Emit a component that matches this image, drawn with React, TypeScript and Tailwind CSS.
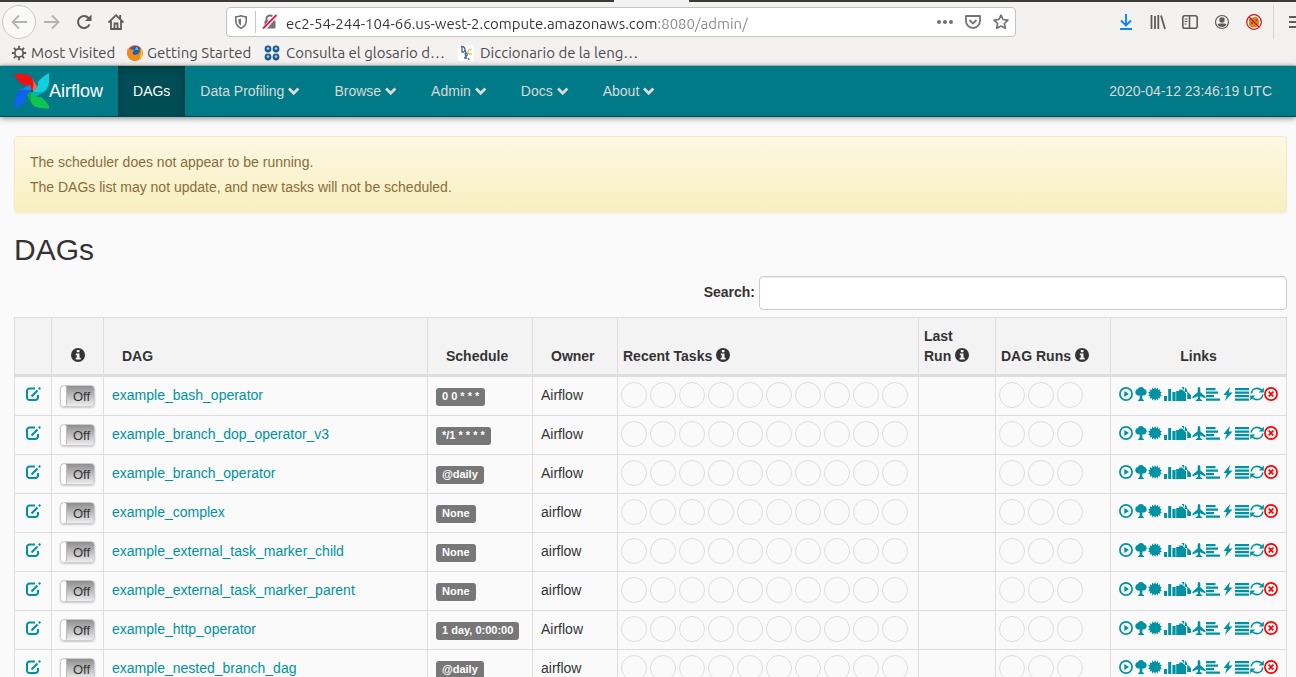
import React, { useState } from 'react';

type Dag = { id: string; schedule: string; owner: string };

const DAGS: Dag[] = [
  { id: 'example_bash_operator', schedule: '0 0 * * *', owner: 'Airflow' },
  { id: 'example_branch_dop_operator_v3', schedule: '*/1 * * * *', owner: 'Airflow' },
  { id: 'example_branch_operator', schedule: '@daily', owner: 'Airflow' },
  { id: 'example_complex', schedule: 'None', owner: 'airflow' },
  { id: 'example_external_task_marker_child', schedule: 'None', owner: 'airflow' },
  { id: 'example_external_task_marker_parent', schedule: 'None', owner: 'airflow' },
  { id: 'example_http_operator', schedule: '1 day, 0:00:00', owner: 'Airflow' },
  { id: 'example_nested_branch_dag', schedule: '@daily', owner: 'airflow' }
];

const MENUS = ['Data Profiling', 'Browse', 'Admin', 'Docs', 'About'];

const LINK_ICONS: { name: string; icon: React.ReactNode }[] = [
  {
    name: 'Trigger Dag',
    icon: (
      <>
        <circle cx="7" cy="7" r="6.1" fill="none" stroke="currentColor" strokeWidth="1.7" />
        <path d="M5.3 4v6L10 7z" />
      </>
    )
  },
  { name: 'Tree View', icon: <path d="M7 0c1.700 0 2.700.9 3 2 1.600.2 2.700 1.400 2.700 3.100 0 1.800-1 3-2.600 3.400H8.300v3.200l1.700 1.800v.5H4v-.5l1.700-1.800V8.500H4C2.300 8.100 1.300 6.900 1.300 5.100c0-1.700 1.100-2.900 2.700-3.100C4.300.9 5.300 0 7 0z" /> },
  { name: 'Graph View', icon: <path d="M7 0l1.100 2.200L9.900.6l.2 2.400 2.300-.7-.8 2.300 2.300.3L12.400 7l1.500 2-2.300.4.8 2.300-2.300-.7-.2 2.400-1.800-1.600L7 14l-1.100-2.200-1.800 1.600-.2-2.400-2.300.7.8-2.300L.1 9l1.500-2L.1 4.900l2.300-.3-.8-2.300 2.300.7.2-2.400 1.800 1.600z" /> },
  { name: 'Tasks Duration', icon: <path d="M1 9h3v5H1zM5.200 2h3v12h-3zM9.400 5h3.200v9H9.400z" /> },
  { name: 'Task Tries', icon: <path d="M-.8 4h3V2.500h3L9 6.300V14H-.8zM4.500 0H7v3.200zM7.800.2L10 2.800V5H7.800zM10.200 4.200l3.800 4V12h-3.800z" /> },
  { name: 'Landing Times', icon: <path d="M7 0c.8 0 1.300.9 1.300 2v3.300l5.200 4.500v1.600L8.300 9.200l-.2 2.600L10.200 13.200V14H3.800v-.8l2.100-1.400-.2-2.600L.5 11.400V9.800l5.200-4.500V2C5.700.9 6.200 0 7 0z" /> },
  { name: 'Gantt View', icon: <path d="M0 1h9.500v2.200H0zM0 4.500h12v2.200H0zM0 8h8v2.200H0zM0 11.500h14v2.200H0z" /> },
  { name: 'Code View', icon: <path d="M9 0L2.500 8h3.300L4 14l7.500-8.500H7.800z" /> },
  { name: 'Logs', icon: <path d="M0 1h14v2.200H0zM0 4.500h14v2.200H0zM0 8h14v2.200H0zM0 11.500h14v2.200H0z" /> },
  {
    name: 'Refresh',
    icon: (
      <>
        <path d="M1.200 6.500C1.500 3.500 4 1.300 7 1.300c1.800 0 3.400.8 4.500 2M12.800 7.500c-.3 3-2.800 5.200-5.800 5.200-1.800 0-3.400-.8-4.500-2" fill="none" stroke="currentColor" strokeWidth="1.700" />
        <path d="M13.800.5v5H8.800zM.2 13.500v-5h5z" />
      </>
    )
  },
  {
    name: 'Delete Dag',
    icon: (
      <>
        <circle cx="7" cy="7" r="6.1" fill="none" stroke="currentColor" strokeWidth="1.700" />
        <path d="M4.700 4.700l4.600 4.600M9.300 4.700L4.700 9.300" stroke="currentColor" strokeWidth="1.800" />
      </>
    )
  }
];

const TopBar: React.FC = () => (
  <div className="flex h-0.5 bg-[#3c3b37]">
    <div className="ml-[614px] w-[75px] bg-[#f3f2f1]" />
  </div>
);

const Toolbar: React.FC = () => (
  <div className="flex h-10 items-center text-[#5c5c5c]">
    <button aria-label="Back" className="ml-0.5 flex h-[34px] w-[34px] shrink-0 items-center justify-center rounded-full border border-[#c9c8c6] bg-[#f9f9f8] text-[#b4b3b1]">
      <svg className="h-4 w-4" viewBox="0 0 16 16" fill="none" stroke="currentColor" strokeWidth="1.800"><path d="M16 8H1.500M8 1.500L1.500 8 8 14.500" /></svg>
    </button>
    <button aria-label="Forward" className="ml-2 text-[#b4b3b1]">
      <svg className="h-4 w-4" viewBox="0 0 16 16" fill="none" stroke="currentColor" strokeWidth="1.800"><path d="M0 8h14.500M8 1.500L14.500 8 8 14.500" /></svg>
    </button>
    <button aria-label="Reload" className="ml-4">
      <svg className="h-4 w-4" viewBox="0 0 16 16" fill="none" stroke="currentColor" strokeWidth="2"><path d="M13.500 10.500A6 6 0 1 1 12.500 4L14 5.500" /><path d="M15.500 0.500V7H9z" fill="currentColor" stroke="none" /></svg>
    </button>
    <button aria-label="Home" className="ml-4">
      <svg className="h-4 w-4" viewBox="0 0 16 16" fill="none" stroke="currentColor" strokeWidth="1.800"><path d="M.5 8.500L8 1.200l7.500 7.300M3 7v8h10V7M12.200 1v4" /><path d="M6.500 15V9.500h3V15" /></svg>
    </button>

    <div className="ml-[102px] flex h-[30px] w-[790px] items-center rounded-sm border border-[#c3c2c0] bg-white">
      <svg className="ml-2 h-[14px] w-3 shrink-0 text-[#737373]" viewBox="0 0 12 14" fill="none" stroke="currentColor" strokeWidth="1.600"><path d="M6 .8c1.500.7 3.200 1 5.200 1v4c0 3.500-1.900 6-5.200 7.400C2.700 11.800.8 9.300.8 5.800v-4c2 0 3.700-.3 5.200-1z" /><path d="M6 3.500c-1 .5-1.800.6-2.600.7v1.900c0 2 .9 3.500 2.600 4.500z" fill="currentColor" stroke="none" /></svg>
      <span className="ml-2 mr-1.5 h-[22px] w-px bg-[#c9c8c6]" />
      <svg className="h-4 w-4 shrink-0" viewBox="0 0 16 16"><path d="M4.500 7V5a3.500 3.500 0 0 1 7 0v2" fill="none" stroke="#737373" strokeWidth="2" /><rect x="2.500" y="6.500" width="11" height="8" rx="1" fill="#737373" /><path d="M2 15L14 1" stroke="#fff" strokeWidth="4" /><path d="M1 14.500L14.500 1" stroke="#f0114e" strokeWidth="1.800" /></svg>
      {/* host part dark, port and path greyed out */}
      <input
        aria-label="Address"
        className="ml-2 h-7 min-w-0 flex-1 bg-[linear-gradient(to_right,#333_371px,#8a8a8a_371px)] bg-clip-text pt-0.5 text-[15px] text-transparent caret-black outline-none"
        defaultValue="ec2-54-244-104-66.us-west-2.compute.amazonaws.com:8080/admin/"
      />
      <div className="flex shrink-0 items-center gap-3 pr-1.5 text-[#737373]">
        <button aria-label="Page actions">
          <svg className="h-4 w-4" viewBox="0 0 16 16" fill="currentColor"><circle cx="2" cy="8" r="2" /><circle cx="8" cy="8" r="2" /><circle cx="14" cy="8" r="2" /></svg>
        </button>
        <button aria-label="Pocket">
          <svg className="h-4 w-4" viewBox="0 0 16 16" fill="none" stroke="currentColor" strokeWidth="1.800"><path d="M1 2h14v5a7 7 0 0 1-14 0z" strokeLinejoin="round" /><path d="M4.500 6L8 9.500 11.500 6" /></svg>
        </button>
        <button aria-label="Bookmark">
          <svg className="h-4 w-4" viewBox="0 0 16 16" fill="none" stroke="currentColor" strokeWidth="1.700" strokeLinejoin="round"><path d="M8 1.200l2.100 4.300 4.800.7-3.500 3.300.9 4.800L8 12l-4.300 2.300.9-4.800L1.100 6.200l4.800-.7z" /></svg>
        </button>
      </div>
    </div>

    <div className="ml-auto flex shrink-0 items-center gap-4">
      <button aria-label="Downloads" className="text-[#0a84ff]">
        <svg className="h-4 w-4" viewBox="0 0 16 16" fill="none" stroke="currentColor" strokeWidth="1.900"><path d="M8 0v11M3 6.500l5 5 5-5M2 15h12" /></svg>
      </button>
      <button aria-label="Library">
        <svg className="h-4 w-4" viewBox="0 0 16 16" fill="none" stroke="currentColor" strokeWidth="1.800"><path d="M1.500 1v14M5 2v13M8.300 1v14M11 1.500L15 15" /></svg>
      </button>
      <button aria-label="Sidebars">
        <svg className="h-4 w-4" viewBox="0 0 16 16" fill="none" stroke="currentColor" strokeWidth="1.600"><rect x=".8" y="1.800" width="14.400" height="12.400" rx="2" /><path d="M7.500 2v12" /><path d="M2.500 5h3M2.500 7.500h3M2.500 10h2" strokeWidth="1" /></svg>
      </button>
      <button aria-label="Account">
        <svg className="h-4 w-4" viewBox="0 0 16 16"><circle cx="8" cy="8" r="6.500" fill="none" stroke="currentColor" strokeWidth="1.200" /><circle cx="8" cy="6" r="2.700" fill="currentColor" /><path d="M3.500 10.500c1 -1.300 2.500-1 4.500-1s3.500-.3 4.500 1c-1 1.500-2.500 2.500-4.500 2.500s-3.500-1-4.500-2.500z" fill="currentColor" /></svg>
      </button>
      <button aria-label="Cookie blocker">
        <svg className="h-4 w-4" viewBox="0 0 16 16"><path d="M3 5c1-1 2-.5 3-1s3-2 5-1l1 2c1.500 1 1.500 4 .5 6L10 13c-3 1-6 0-7-2-1-1 1-2 0-3z" fill="#d98316" /><circle cx="6" cy="9" r="1" fill="#8a4b0c" /><circle cx="10.500" cy="6" r="1" fill="#8a4b0c" /><circle cx="8" cy="8" r="7.300" fill="none" stroke="#d0101a" strokeWidth="1.200" /><path d="M3 3l10 10" stroke="#d0101a" strokeWidth="1.200" /></svg>
      </button>
    </div>
    <div className="ml-[11px] h-[34px] w-px shrink-0 bg-[#d5d4d2]" />
    <button aria-label="Menu" className="ml-[14px] w-2 shrink-0 overflow-hidden">
      <svg className="h-4 w-4" viewBox="0 0 16 16" fill="none" stroke="currentColor" strokeWidth="1.800"><path d="M1 3h14M1 8h14M1 13h14" /></svg>
    </button>
  </div>
);

const Bookmarks: React.FC = () => (
  <div className="flex h-6 items-center whitespace-nowrap border-b border-[#c8c7c5] pb-0.5 pl-[11px] text-[15px] text-[#4c4c4c]">
    <a href="#" className="flex w-[116px] items-center gap-1">
      <svg className="h-4 w-4" viewBox="0 0 16 16" fill="none" stroke="#5c5c5c"><circle cx="8" cy="8" r="4.200" strokeWidth="1.800" /><path d="M8 .8V4M8 12v3.200M.8 8H4M12 8h3.200M2.900 2.900l2.200 2.200M10.900 10.900l2.200 2.200M2.900 13.100l2.200-2.200M10.900 5.100l2.200-2.200" strokeWidth="1.800" /></svg>
      Most Visited
    </a>
    <a href="#" className="flex w-[137px] items-center gap-1">
      <svg className="h-4 w-4" viewBox="0 0 16 16"><circle cx="8" cy="8" r="7.800" fill="#e8501c" /><circle cx="8.500" cy="6.500" r="5.500" fill="#1e5fae" /><path d="M9 2c2 0 3 2 2 3L8 5z" fill="#5db4e8" /><path d="M.5 3.500L3 4.500c2-.8 3 0 4 1L5.500 7.500c0 2 2 3 4 2 3 0 4-4 3-7 3 3 4 8 1 11-4 3.500-10 3-12.500-1.500C0 9 .2 6 .5 3.500z" fill="#f28a1c" /><path d="M14 3c2.500 4 2 9-2 11.500 1-3 2.500-5 2-11.500z" fill="#fbc62c" /></svg>
      Getting Started
    </a>
    <a href="#" className="flex w-[194px] items-center gap-1.5">
      <svg className="h-4 w-4" viewBox="0 0 16 16"><g fill="#1c5a94"><circle cx="4" cy="4" r="3.400" /><circle cx="12" cy="4" r="3.400" /><circle cx="4" cy="12" r="3.400" /><circle cx="12" cy="12" r="3.400" /></g><g fill="#a9d4f2"><circle cx="4" cy="3.500" r="1.300" /><circle cx="12" cy="3.500" r="1.300" /><circle cx="4" cy="11.500" r="1.300" /><circle cx="12" cy="11.500" r="1.300" /></g></svg>
      Consulta el glosario d…
    </a>
    <a href="#" className="flex items-center gap-1.5">
      <svg className="h-4 w-4 bg-white" viewBox="0 0 16 16" fill="none" strokeWidth="1.300"><path d="M4 1v6.500M3 1.500c4-1 6 5 1 6M7.500 5v8M6.500 8.500c3-1.500 4 1 1.500 3M6 13h3M10 13l1 2" stroke="#4664a0" /><path d="M13.500 5c-2-1-3.500 0-3.500 2s2 3 4 1.500" stroke="#f0bd43" /></svg>
      Diccionario de la leng…
    </a>
  </div>
);

const BLADE = 'M-18 -17C-12 -18 -4 -17 -1 -14C3 -10 2 -4 0 0C-2 -5 -5 -6.500 -9 -6C-13 -9 -16 -13 -18 -17z';
const FOLD = 'M0 -13C2 -9 5 -6 6 -2L0 0C2 -4 2 -9 0 -13z';

const Logo: React.FC = () => (
  <svg className="h-9 w-[35px]" viewBox="0 0 35 36">
    <g transform="translate(18 18)">
      <g><path d={BLADE} fill="#f01010" /><path d={FOLD} fill="#ff6048" /></g>
      <g transform="rotate(90)"><path d={BLADE} fill="#11d0dd" /><path d={FOLD} fill="#00b4c6" /></g>
      <g transform="rotate(180)"><path d={BLADE} fill="#0cc552" /><path d={FOLD} fill="#0aa848" /></g>
      <g transform="rotate(270)"><path d={BLADE} fill="#0f62ee" /><path d={FOLD} fill="#0f8cf0" /></g>
      <circle r="1" fill="#333" />
    </g>
  </svg>
);

const Navbar: React.FC = () => (
  <nav className="relative flex h-[51px] shrink-0 items-stretch border-b border-[#004b53] bg-[#007a87] pl-[14px] text-sm leading-5 text-[#d9d9d9] shadow-[0_1px_6px_rgba(0,0,0,0.5)]">
    <a href="#" className="flex items-center pr-[15px] text-lg text-white">
      <Logo />
      Airflow
    </a>
    <a href="#" className="flex items-center bg-[#004d55] px-[15px] text-white shadow-[inset_0_3px_9px_rgba(0,0,0,0.25)]">DAGs</a>
    {MENUS.map(menu => (
      <button key={menu} className="flex items-center gap-1 px-[15px]">
        {menu}
        <svg className="h-4 w-4" viewBox="0 0 16 16" fill="none" stroke="currentColor" strokeWidth="2.800"><path d="M1 5.500l4.700 4.700 4.700-4.700" /></svg>
      </button>
    ))}
    <span className="ml-auto flex items-center pr-6">2020-04-12 23:46:19 UTC</span>
  </nav>
);

const Toggle: React.FC<{ id: string }> = ({ id }) => {
  const [on, setOn] = useState(false);
  return (
    <label className="relative flex h-[22px] w-[35px] cursor-pointer overflow-hidden rounded-sm border border-[#ccc] bg-linear-to-b from-[#8f8f8f] to-[#eee] leading-[22px] shadow-[0_1px_2px_rgba(0,0,0,0.2)]">
      <input type="checkbox" aria-label={id} className="sr-only" checked={on} onChange={e => setOn(e.target.checked)} />
      <span className="mr-auto w-[6px] rounded-xs border-r border-[#bbb] bg-white" />
      <span className="pr-1 text-[13px] text-[#333]">{on ? 'On' : 'Off'}</span>
    </label>
  );
};

const Circles: React.FC<{ count: number }> = ({ count }) => (
  <div className="flex gap-[3px]">
    {Array.from({ length: count }, (_, i) => (
      <span key={i} className="h-[26px] w-[26px] shrink-0 rounded-full border border-[#ddd]" />
    ))}
  </div>
);

const Info: React.FC = () => (
  <svg className="inline h-[14px] w-[14px] align-[-1px]" viewBox="0 0 14 14">
    <circle cx="7" cy="7" r="7" fill="currentColor" />
    <path d="M5.800 2h2.700v2.200H5.800zM4.800 5.500h3.700v4.300h1.200V11.500H4.600V9.800h1.200V7.200h-1z" fill="#f3f3f3" />
  </svg>
);

const DagRow: React.FC<{ dag: Dag }> = ({ dag }) => (
  <tr className="h-[39px] align-top *:border-b *:border-r *:border-[#ddd]">
    <td className="pl-[11px] pt-[10px]">
      <a href="#" aria-label={`Edit ${dag.id}`} className="block text-[#0092a2]">
        <svg className="h-[14px] w-4" viewBox="0 0 16 14" fill="none" stroke="currentColor"><path d="M9 1.500H3.500a2.500 2.500 0 0 0-2.500 2.500v6.500A2.500 2.500 0 0 0 3.500 13h6a2.500 2.500 0 0 0 2.500-2.500V8" strokeWidth="2" /><path d="M5.500 9.500L11.500 3.500" strokeWidth="2.200" /><path d="M12.800 2.300L14.300.8" strokeWidth="2" /></svg>
      </a>
    </td>
    <td className="px-2 pt-2"><Toggle id={dag.id} /></td>
    <td className="px-2 pt-2"><a href="#" className="text-[#0092a2]">{dag.id}</a></td>
    <td className="px-2 pt-[11px]">
      <a href="#" className="block w-fit rounded-[3px] bg-[#777] px-1.5 pb-0.5 text-[11px] font-bold leading-4 text-white">{dag.schedule}</a>
    </td>
    <td className="px-2 pt-2">{dag.owner}</td>
    <td className="pl-[3px] pt-[5px]"><Circles count={10} /></td>
    <td />
    <td className="pl-[3px] pt-[5px]"><Circles count={3} /></td>
    <td className="px-2 pt-[10px]">
      <div className="flex justify-between">
        {LINK_ICONS.map(({ name, icon }) => (
          <a key={name} href="#" aria-label={name} className={name === 'Delete Dag' ? 'text-[#f00]' : 'text-[#0092a2]'}>
            <svg className="h-[14px] w-[14px] overflow-visible" viewBox="0 0 14 14" fill="currentColor">{icon}</svg>
          </a>
        ))}
      </div>
    </td>
  </tr>
);

const App: React.FC = () => {
  const [search, setSearch] = useState('');
  const rows = DAGS.filter(d => d.id.includes(search));

  return (
    <div className="flex h-screen flex-col overflow-hidden bg-[#fafafa] font-['Liberation_Sans',Arial,sans-serif] text-sm leading-5 text-[#333]">
      <header className="shrink-0 bg-[#f3f2f1] font-['Ubuntu','Open_Sans',sans-serif]">
        <TopBar />
        <Toolbar />
        <Bookmarks />
      </header>
      <Navbar />

      <main className="min-h-0 flex-1 overflow-hidden pl-[14px] pr-[9px] pt-[19px]">
        <div className="space-y-[5px] rounded-sm border border-[#fbe8c8] bg-linear-to-b from-[#fcf8e3] to-[#f8efc0] p-[15px] text-[#8a6d3b] shadow-[0_1px_2px_rgba(0,0,0,0.05)]">
          <p>The scheduler does not appear to be running.</p>
          <p>The DAGs list may not update, and new tasks will not be scheduled.</p>
        </div>

        <h2 className="mb-[10px] mt-5 text-[30px] leading-[33px]">DAGs</h2>

        <div className="mb-[7px] flex items-center justify-end gap-1">
          <label htmlFor="dag-search" className="pb-0.5 font-bold">Search:</label>
          <input
            id="dag-search"
            type="search"
            value={search}
            onChange={e => setSearch(e.target.value)}
            className="h-[34px] w-[528px] rounded-sm border border-[#ccc] bg-white px-3 shadow-[inset_0_1px_1px_rgba(0,0,0,0.075)]"
          />
        </div>

        <table className="w-full table-fixed border-separate border-spacing-0 border-l border-t border-[#ddd]">
          <colgroup>
            <col className="w-[37px]" />
            <col className="w-[52px]" />
            <col />
            <col className="w-[105px]" />
            <col className="w-[85px]" />
            <col className="w-[301px]" />
            <col className="w-[77px]" />
            <col className="w-[115px]" />
            <col className="w-[176px]" />
          </colgroup>
          <thead className="bg-[#f3f3f3]">
            <tr className="text-left align-bottom *:border-b-3 *:border-r *:border-[#ddd] *:py-2">
              <th />
              <th className="text-center"><Info /></th>
              <th className="px-[18px]">DAG</th>
              <th className="px-[18px]">Schedule</th>
              <th className="pl-[18px]">Owner</th>
              <th className="px-[5px]">Recent Tasks <Info /></th>
              <th className="pl-[5px] pr-[18px]">Last Run <Info /></th>
              <th className="px-[5px]">DAG Runs <Info /></th>
              <th className="text-center">Links</th>
            </tr>
          </thead>
          <tbody>
            {rows.map(dag => <DagRow key={dag.id} dag={dag} />)}
          </tbody>
        </table>
      </main>
    </div>
  );
};

export default App;
